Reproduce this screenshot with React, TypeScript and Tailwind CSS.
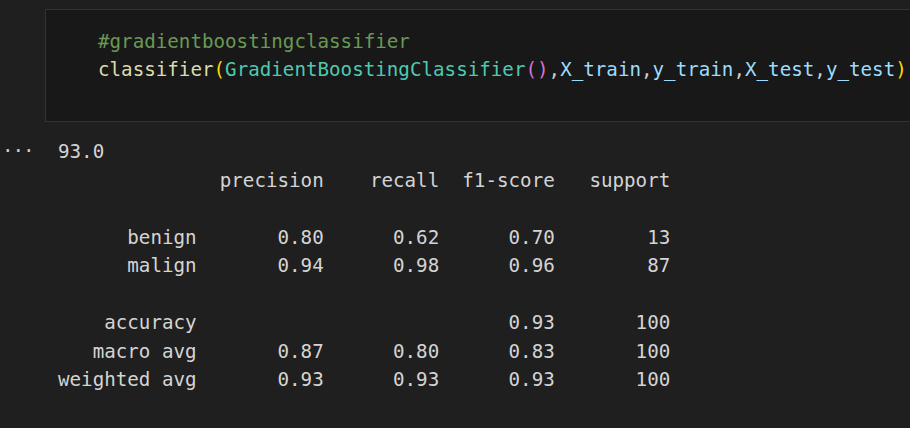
const report = `93.0
              precision    recall  f1-score   support

      benign       0.80      0.62      0.70        13
      malign       0.94      0.98      0.96        87

    accuracy                           0.93       100
   macro avg       0.87      0.80      0.83       100
weighted avg       0.93      0.93      0.93       100`;

export default function App() {
  return (
    <div className="w-[910px] h-[428px] overflow-hidden bg-[#1f1f1f] font-['DejaVu_Sans_Mono',monospace] text-[19.2px] leading-[28px]">
      <div className="pt-[9px]">
        <div className="ml-[45px] border border-r-0 border-[#333333] bg-[#181818] pl-[52px] pt-[18px] pb-[37px] whitespace-pre">
          <div className="text-[#6a9955]">#gradientboostingclassifier</div>
          <div className="text-[#cccccc]">
            <span className="text-[#dcdcaa]">classifier</span>
            <span className="text-[#ffd700]">(</span>
            <span className="text-[#4ec9b0]">GradientBoostingClassifier</span>
            <span className="text-[#da70d6]">()</span>,
            <span className="text-[#9cdcfe]">X_train</span>,
            <span className="text-[#9cdcfe]">y_train</span>,
            <span className="text-[#9cdcfe]">X_test</span>,
            <span className="text-[#9cdcfe]">y_test</span>
            <span className="text-[#ffd700]">)</span>
          </div>
        </div>
      </div>
      <div className="flex mt-[16px]">
        <div className="w-[58px] pl-[2px] text-[#cccccc] leading-[26px] tracking-[-1px]">···</div>
        <pre className="font-['DejaVu_Sans_Mono',monospace] text-[#d4d4d4] leading-[28.5px]">{report}</pre>
      </div>
    </div>
  );
}
